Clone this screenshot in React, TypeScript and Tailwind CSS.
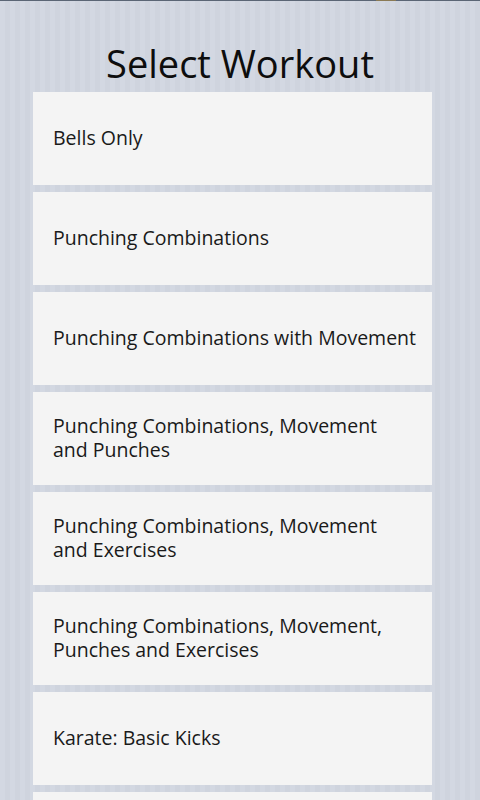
import React from "react";

const items: string[][] = [
  ["Bells Only"],
  ["Punching Combinations"],
  ["Punching Combinations with Movement"],
  ["Punching Combinations, Movement", "and Punches"],
  ["Punching Combinations, Movement", "and Exercises"],
  ["Punching Combinations, Movement,", "Punches and Exercises"],
  ["Karate: Basic Kicks"],
  ["Karate: Advanced Kicks"],
];

export default function App() {
  return (
    <div className="relative h-[800px] w-[480px] overflow-hidden bg-[repeating-linear-gradient(90deg,#d3d8e2_0px,#d3d8e2_5px,#cfd4de_5px,#cfd4de_10px)] font-['Open_Sans',sans-serif]">
      <div className="relative h-px bg-[#5b6675]">
        <div className="absolute left-[376px] top-0 h-px w-[20px] bg-[#8a7a55]" />
      </div>
      <div className="flex h-[91px] items-end justify-center pb-[5px]">
        <h1 className="text-[38px] leading-[48px] text-[#0d0d0d]">Select Workout</h1>
      </div>
      <div className="ml-[33px] flex w-[399px] flex-col gap-[7px]">
        {items.map((lines) => (
          <div
            key={lines.join(" ")}
            className="flex h-[93px] shrink-0 flex-col justify-center bg-[#f4f4f4] pb-[2px] pl-[20px] text-[19.5px] leading-[24px] text-[#1a1a1a]"
          >
            {lines.map((l) => (
              <span key={l} className="block whitespace-nowrap">
                {l}
              </span>
            ))}
          </div>
        ))}
      </div>
    </div>
  );
}
